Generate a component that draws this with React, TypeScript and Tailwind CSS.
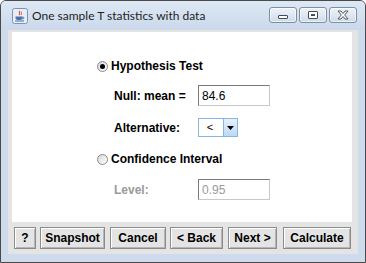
import React from 'react';

const label = "font-['Liberation_Sans',Arial,sans-serif] font-bold text-[12px] leading-none";

function JavaIcon() {
  return (
    <svg width="16" height="16" viewBox="0 0 16 16">
      <rect x="0.5" y="0.5" width="15" height="15" rx="2" fill="#e9eef6" stroke="#7d93b3" />
      <path d="M7 3 C9 4.5 6 5.5 8 7" stroke="#e2562b" strokeWidth="1.2" fill="none" />
      <path d="M9 3.5 C10.5 5 8.5 5.5 9.5 7" stroke="#e2562b" strokeWidth="1" fill="none" />
      <path d="M3.5 8.5 H10.5 V10 C10.5 11.5 9 12 7 12 C5 12 3.5 11.5 3.5 10 Z" fill="#4b6fa6" />
      <path d="M10.5 9 C12.5 9 12.5 11 10.2 11" stroke="#4b6fa6" strokeWidth="1" fill="none" />
      <path d="M3 13 H12" stroke="#4b6fa6" strokeWidth="1" />
    </svg>
  );
}

function CaptionButton({ children }: { children: React.ReactNode }) {
  return (
    <div className="w-[28px] h-[16px] rounded-[3px] border border-[#7e8ea3] bg-gradient-to-b from-[#eef3f9] to-[#cfdbea] flex items-center justify-center shadow-[inset_0_0_0_1px_rgba(255,255,255,0.6)]">
      {children}
    </div>
  );
}

function Radio({ checked }: { checked?: boolean }) {
  return (
    <div className="w-[11px] h-[11px] rounded-full border border-[#8a8a8a] bg-gradient-to-br from-[#d8d8d8] to-white flex items-center justify-center">
      {checked && <div className="w-[5px] h-[5px] rounded-full bg-black" />}
    </div>
  );
}

function Btn({ w, children }: { w: string; children: React.ReactNode }) {
  return (
    <div className={`${w} h-[22px] border border-[#8c8c8c] bg-[#e4e4e4] shadow-[inset_1px_1px_0_#ffffff,inset_-1px_-1px_0_#b5b5b5] flex items-center justify-center ${label} text-black`}>
      {children}
    </div>
  );
}

export default function App() {
  return (
    <div className="w-[366px] h-[263px] bg-white">
      <div className="w-[366px] h-[263px] flex flex-col border border-[#4a4a4a] rounded-t-[6px] bg-[#cddbec] overflow-hidden">
        {/* title bar */}
        <div className="h-[29px] flex items-center pl-[11px] pr-[8px] bg-gradient-to-b from-[#dde8f4] to-[#cad9eb]">
          <JavaIcon />
          <span className="ml-[4px] font-['Lato',sans-serif] text-[12px] text-[#1e1e1e] leading-none whitespace-nowrap">
            One sample T statistics with data
          </span>
          <div className="ml-auto flex gap-[2px] mb-[2px]">
            <CaptionButton>
              <div className="w-[10px] h-[4px] border border-[#444c57] bg-white rounded-[1px] mt-[4px]" />
            </CaptionButton>
            <CaptionButton>
              <div className="w-[10px] h-[8px] border border-[#444c57] bg-white rounded-[1px] flex items-center justify-center">
                <div className="w-[4px] h-[2px] bg-[#444c57]" />
              </div>
            </CaptionButton>
            <CaptionButton>
              <svg width="14" height="10" viewBox="0 0 14 10">
                <path d="M2 1 H5 L7 3.5 L9 1 H12 L8.7 5 L12 9 H9 L7 6.5 L5 9 H2 L5.3 5 Z" fill="#fff" stroke="#444c57" strokeWidth="0.9" strokeLinejoin="round" />
              </svg>
            </CaptionButton>
          </div>
        </div>
        {/* client area */}
        <div className="mx-[7px] h-[224px] bg-[#e4e4e4] flex flex-col">
          <div className="ml-[4px] mr-[6px] mt-[2px] h-[190px] bg-white flex flex-col pl-[85px]">
            <div className="mt-[28px] flex items-center h-[12px]">
              <Radio checked />
              <span className={`${label} ml-[3px] text-black`}>Hypothesis Test</span>
            </div>
            <div className="mt-[13px] flex items-center">
              <span className={`${label} ml-[17px] w-[84px] text-black`}>Null: mean =</span>
              <div className="w-[72px] h-[21px] border border-t-[#7a7a7a] border-l-[#7a7a7a] border-r-[#c8c8c8] border-b-[#c8c8c8] bg-white flex items-center pl-[3px] font-['Liberation_Sans',Arial,sans-serif] text-[12px] text-black">
                84.6
              </div>
            </div>
            <div className="mt-[12px] flex items-center">
              <span className={`${label} ml-[17px] w-[84px] text-black`}>Alternative:</span>
              <div className="w-[40px] h-[19px] border border-[#86b6e4] bg-white flex">
                <div className="flex-1 flex items-center justify-center font-['Liberation_Sans',Arial,sans-serif] text-[11px] text-black pr-[2px]">&lt;</div>
                <div className="w-[14px] border-l border-[#86b6e4] bg-gradient-to-b from-[#e6f1fb] to-[#bcd9f3] flex items-center justify-center">
                  <svg width="7" height="4" viewBox="0 0 7 4"><path d="M0 0 H7 L3.5 4 Z" fill="#000" /></svg>
                </div>
              </div>
            </div>
            <div className="mt-[16px] flex items-center h-[12px]">
              <Radio />
              <span className={`${label} ml-[3px] text-black`}>Confidence Interval</span>
            </div>
            <div className="mt-[14px] flex items-center">
              <span className={`${label} ml-[17px] w-[84px] text-[#9a9a9a]`}>Level:</span>
              <div className="w-[72px] h-[21px] border border-t-[#7a7a7a] border-l-[#7a7a7a] border-r-[#c8c8c8] border-b-[#c8c8c8] bg-white flex items-center pl-[3px] font-['Liberation_Sans',Arial,sans-serif] text-[12px] text-[#9a9a9a]">
                0.95
              </div>
            </div>
          </div>
          <div className="mt-[5px] ml-[6px] flex">
            <Btn w="w-[22px]">?</Btn>
            <div className="w-[4px]" />
            <Btn w="w-[65px]">Snapshot</Btn>
            <div className="w-[5px]" />
            <Btn w="w-[56px]">Cancel</Btn>
            <div className="w-[4px]" />
            <Btn w="w-[53px]">&lt; Back</Btn>
            <div className="w-[5px]" />
            <Btn w="w-[49px]">Next &gt;</Btn>
            <div className="w-[6px]" />
            <Btn w="w-[68px]">Calculate</Btn>
          </div>
        </div>
      </div>
    </div>
  );
}
